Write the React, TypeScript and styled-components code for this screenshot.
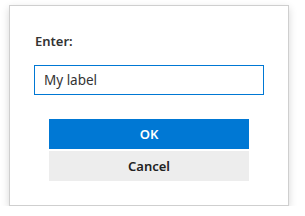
import styled, { createGlobalStyle } from 'styled-components';

const GlobalStyle = createGlobalStyle`
  body {
    margin: 0;
    background: #ffffff;
    font-family: 'Noto Sans', 'Open Sans', sans-serif;
  }
`;

export default function App() {
  return (
    <>
      <GlobalStyle />
      <Dialog>
        <Label htmlFor="label-input">Enter:</Label>
        <Input id="label-input" defaultValue="My label" />
        <Buttons>
          <Button primary>OK</Button>
          <Button>Cancel</Button>
        </Buttons>
      </Dialog>
    </>
  );
}

const Dialog = styled.div`
  box-sizing: border-box;
  margin: 5px 0 0 9px;
  width: 280px;
  height: 201px;
  padding: 26px 24px 0 24px;
  border: 1px solid #cfcfcf;
  background: #ffffff;
  box-shadow: 0 3px 8px rgba(0, 0, 0, 0.16);
  display: flex;
  flex-direction: column;
`;

const Label = styled.label`
  padding-left: 1px;
  font-size: 13px;
  line-height: 18px;
  font-weight: 600;
  color: #333333;
`;

const Input = styled.input`
  box-sizing: border-box;
  margin-top: 15px;
  width: 230px;
  height: 30px;
  padding: 0 9px;
  border: 1px solid #0078d4;
  border-radius: 0;
  outline: none;
  font-family: inherit;
  font-size: 13.5px;
  color: #333333;
`;

const Buttons = styled.div`
  margin-top: 24px;
  display: flex;
  flex-direction: column;
  gap: 2px;
  align-items: center;
`;

const Button = styled.button<{ primary?: boolean }>`
  width: 200px;
  height: 30px;
  border: none;
  border-radius: 0;
  padding: 0;
  font-family: inherit;
  font-size: 13px;
  font-weight: 600;
  background: ${(p) => (p.primary ? '#0078d4' : '#ededed')};
  color: ${(p) => (p.primary ? '#ffffff' : '#222222')};
`;
